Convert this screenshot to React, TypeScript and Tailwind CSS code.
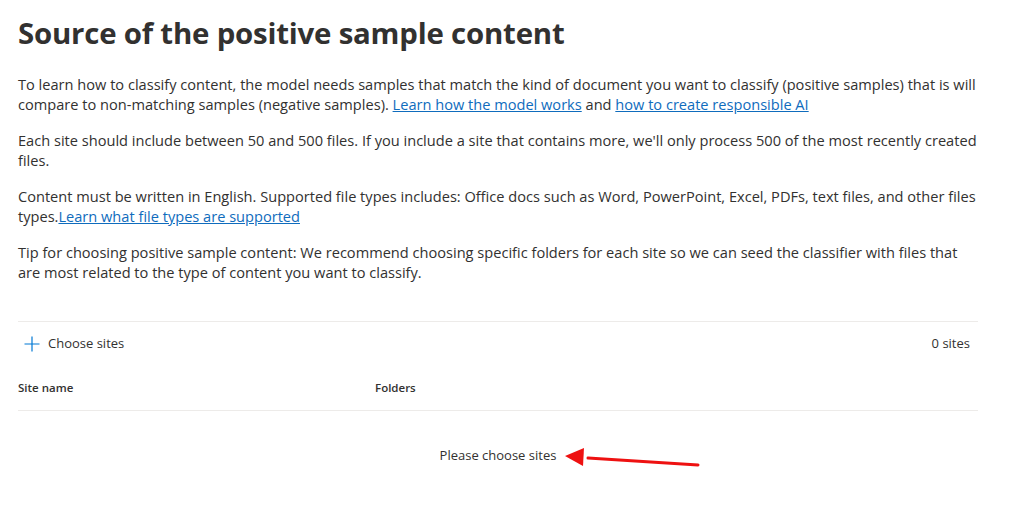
import React from "react";

const font = { fontFamily: '"Open Sans", "Noto Sans", sans-serif' };

export default function App() {
  return (
    <div className="w-[1024px] h-[511px] bg-white text-[#323130] overflow-hidden" style={font}>
      <div className="pl-[18px] w-[978px]">
        <h1 className="pt-[13px] text-[29.4px] leading-[40px] font-bold tracking-[-0.2px]">
          Source of the positive sample content
        </h1>
        <div className="mt-[21px] text-[14.6px] leading-[20px] flex flex-col gap-[16px]">
          <p>
            To learn how to classify content, the model needs samples that match the kind of document you want to classify (positive samples) that is will compare to non-matching samples (negative samples).{" "}
            <a className="text-[#0f6cbd] underline">Learn how the model works</a> and{" "}
            <a className="text-[#0f6cbd] underline">how to create responsible AI</a>
          </p>
          <p>
            Each site should include between 50 and 500 files. If you include a site that contains more, we'll only process 500 of the most recently created files.
          </p>
          <p>
            Content must be written in English. Supported file types includes: Office docs such as Word, PowerPoint, Excel, PDFs, text files, and other files types.
            <a className="text-[#0f6cbd] underline">Learn what file types are supported</a>
          </p>
          <p>
            Tip for choosing positive sample content: We recommend choosing specific folders for each site so we can seed the classifier with files that are most related to the type of content you want to classify.
          </p>
        </div>
        <div className="mt-[39px] border-t border-[#edebe9] w-[960px]">
          <div className="h-[44px] flex items-center justify-between pl-[6px] pr-[8px] text-[13px]">
            <div className="flex items-center gap-[8px]">
              <svg width="16" height="16" viewBox="0 0 16 16">
                <path d="M8 0.5V15.5M0.5 8H15.5" stroke="#0078d4" strokeWidth="1.2" fill="none" />
              </svg>
              <span>Choose sites</span>
            </div>
            <span>0 sites</span>
          </div>
          <div className="h-[45px] flex items-center text-[11.5px] font-semibold border-b border-[#edebe9]">
            <div className="w-[357px]">Site name</div>
            <div>Folders</div>
          </div>
          <div className="relative h-[90px] flex justify-center pt-[35px] text-[13px]">
            <span>Please choose sites</span>
            <svg className="absolute left-[540px] top-[32px]" width="150" height="30" viewBox="0 0 150 30">
              <path d="M140 22 L30 15" stroke="#ee1111" strokeWidth="3" strokeLinecap="round" fill="none" />
              <path d="M7 13 L26 5 L25 23 Z" fill="#ee1111" />
            </svg>
          </div>
        </div>
      </div>
    </div>
  );
}
